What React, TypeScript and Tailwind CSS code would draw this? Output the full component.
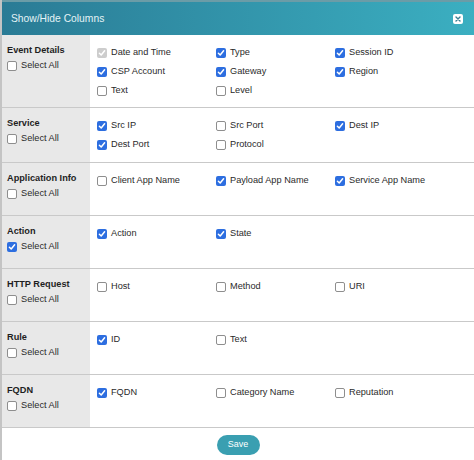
import React from "react";

type St = "on" | "off" | "dis";

function Box({ s }: { s: St }) {
  if (s === "off")
    return <span className="inline-block w-[10px] h-[10px] shrink-0 rounded-[2px] border border-[#8e8e8e] bg-white" />;
  return (
    <span
      className={
        "inline-flex items-center justify-center w-[10px] h-[10px] shrink-0 rounded-[2px] " +
        (s === "on" ? "bg-[#2d6ee0]" : "bg-[#cdcdcd]")
      }
    >
      <svg width="8" height="8" viewBox="0 0 8 8">
        <path d="M1.4 4.2 L3.2 6 L6.6 1.8" fill="none" stroke="#fff" strokeWidth="1.5" strokeLinecap="round" strokeLinejoin="round" />
      </svg>
    </span>
  );
}

type Item = [string, St];

const rows: { label: string; all: St; items: Item[]; tall?: boolean }[] = [
  {
    label: "Event Details",
    all: "off",
    items: [
      ["Date and Time", "dis"],
      ["Type", "on"],
      ["Session ID", "on"],
      ["CSP Account", "on"],
      ["Gateway", "on"],
      ["Region", "on"],
      ["Text", "off"],
      ["Level", "off"],
    ],
  },
  {
    label: "Service",
    all: "off",
    tall: true,
    items: [
      ["Src IP", "on"],
      ["Src Port", "off"],
      ["Dest IP", "on"],
      ["Dest Port", "on"],
      ["Protocol", "off"],
    ],
  },
  {
    label: "Application Info",
    all: "off",
    items: [
      ["Client App Name", "off"],
      ["Payload App Name", "on"],
      ["Service App Name", "on"],
    ],
  },
  { label: "Action", all: "on", items: [["Action", "on"], ["State", "on"]] },
  {
    label: "HTTP Request",
    all: "off",
    items: [
      ["Host", "off"],
      ["Method", "off"],
      ["URI", "off"],
    ],
  },
  { label: "Rule", all: "off", items: [["ID", "on"], ["Text", "off"]] },
  {
    label: "FQDN",
    all: "off",
    items: [
      ["FQDN", "on"],
      ["Category Name", "off"],
      ["Reputation", "off"],
    ],
  },
];

export default function App() {
  return (
    <div
      className="w-[474px] h-[460px] bg-white flex flex-col overflow-hidden border-l-2 border-[#c4c4c4]"
      style={{ fontFamily: '"Liberation Sans", Arial, sans-serif' }}
    >
      <div className="h-[35px] shrink-0 flex items-center justify-between pl-[9px] pr-[11px] bg-gradient-to-r from-[#2a7b95] to-[#3bafc1] border-t-[2px] border-[#6b9ca7]">
        <span className="text-[10.3px] text-[#e3f3f6]">Show/Hide Columns</span>
        <span className="w-[10px] h-[10px] rounded-[2px] bg-white flex items-center justify-center">
          <svg width="6" height="6" viewBox="0 0 6 6">
            <path d="M1 1 L5 5 M5 1 L1 5" stroke="#3a7f93" strokeWidth="1.4" strokeLinecap="round" />
          </svg>
        </span>
      </div>
      {rows.map((r, i) => (
        <div key={i} className="flex border-b border-[#c9c9c9] text-[9.2px] text-[#2a2a2a]">
          <div className={"w-[88px] shrink-0 bg-[#e8e8e8] pl-[5px] pt-[8px] " + (r.tall ? "pb-[14px]" : "pb-[12px]")}>
            <div className="h-[14px] leading-[14px] font-bold text-[#1f1f1f]">{r.label}</div>
            <div className="h-[18px] flex items-center gap-[4px]">
              <Box s={r.all} />
              <span>Select All</span>
            </div>
          </div>
          <div className="flex-1 pl-[7px] pt-[8px] pb-[7px] grid grid-cols-[119px_119px_119px] auto-rows-[19px] content-start">
            {r.items.map((it, j) => (
              <div key={j} className="flex items-center gap-[4px]">
                <Box s={it[1]} />
                <span>{it[0]}</span>
              </div>
            ))}
          </div>
        </div>
      ))}
      <div className="flex justify-center pt-[7px]">
        <button className="w-[43px] h-[20px] rounded-full bg-[#3a9fb1] text-white text-[9px]">Save</button>
      </div>
    </div>
  );
}
